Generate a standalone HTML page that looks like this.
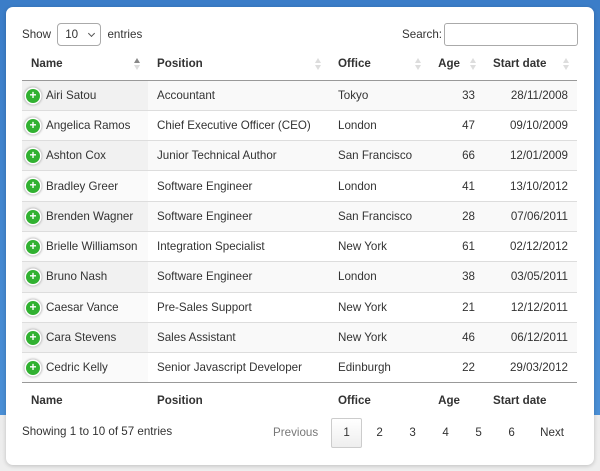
<!DOCTYPE html>
<html><head><style>
*{box-sizing:border-box}
body{margin:0;width:600px;height:471px;overflow:hidden;font-family:"Liberation Sans",Arial,sans-serif;font-size:11.6px;color:#333;background:linear-gradient(#3b7dc8,#4a8fd6 415px,#ececec 415px,#eeeeee);position:relative}
.card{position:absolute;left:6px;top:7px;width:588px;height:458px;background:#fff;border-radius:7px;box-shadow:0 1px 4px rgba(0,0,0,.2)}
.top{position:absolute;top:23px;height:24px;line-height:24px}
.sel{display:inline-block;width:44px;height:23px;border:1px solid #aaa;border-radius:4px;vertical-align:middle;margin:0 3px;padding-left:7px;line-height:21px;position:relative}
.sel:after{content:"";position:absolute;right:6px;top:7px;width:4px;height:4px;border-right:1px solid #555;border-bottom:1px solid #555;transform:rotate(45deg)}
.search{position:absolute;right:0;top:0}
.search span{display:inline-block;width:134px;height:23px;border:1px solid #aaa;border-radius:3px;vertical-align:middle;margin-left:2px}
table{position:absolute;top:48px;width:555px;border-collapse:collapse;table-layout:fixed}
th{font-weight:bold;text-align:left;height:32px;padding:0 9px;position:relative}
thead th{border-bottom:1px solid #999}
tfoot th{border-top:1px solid #999;height:34px}
td{height:30.3px;padding:0 9px;border-top:1px solid #ddd;white-space:nowrap;overflow:hidden}
tbody tr:first-child td{border-top:none}
tbody tr:nth-child(odd) td{background:#f9f9f9}
tbody tr:nth-child(odd) td:first-child{background:#f1f1f1}
tbody tr:nth-child(even) td:first-child{background:#fafafa}
td:first-child{padding-left:24px;position:relative}
td:first-child:before{content:"+";position:absolute;left:4px;top:8px;width:14px;height:14px;border-radius:50%;background:#31b131;color:#fff;font-weight:bold;font-size:12px;line-height:13px;text-align:center;box-shadow:0 0 0 1.5px #fff,0 0 2px 2px #aaa}
.r{text-align:right}
.s:after{content:"";position:absolute;right:8px;top:10px;border:3.5px solid transparent;border-bottom:5px solid #ddd;border-top:0}
.s:before{content:"";position:absolute;right:8px;top:17px;border:3.5px solid transparent;border-top:5px solid #ddd;border-bottom:0}
.s.a:after{border-bottom-color:#888}
.bot{position:absolute;line-height:20px}
.pg{position:absolute;right:0;top:-4px;display:flex}
.pg span{display:inline-block;width:33px;text-align:center;line-height:28px;height:30px;border:1px solid transparent;color:#333}
.pg .c{border:1px solid #ccc;border-radius:2px;background:linear-gradient(#fff,#eee);width:31px;margin:0 1px}
.pg .d{width:auto;padding:0 11px 0 14px;color:#777}
.pg .n{width:auto;padding:0 14px 0 11px}
</style></head><body>
<div class="card"></div>
<div class="top" style="left:22px;right:22px">Show <span class="sel">10</span> entries<div class="search">Search:<span></span></div></div>
<table style="left:22px">
<colgroup><col style="width:126px"><col style="width:181px"><col style="width:100px"><col style="width:55px"><col style="width:93px"></colgroup>
<thead><tr><th class="s a">Name</th><th class="s">Position</th><th class="s">Office</th><th class="s r" style="padding-right:24px">Age</th><th class="s">Start date</th></tr></thead>
<tbody>
<tr><td>Airi Satou</td><td>Accountant</td><td>Tokyo</td><td class="r">33</td><td class="r">28/11/2008</td></tr>
<tr><td>Angelica Ramos</td><td>Chief Executive Officer (CEO)</td><td>London</td><td class="r">47</td><td class="r">09/10/2009</td></tr>
<tr><td>Ashton Cox</td><td>Junior Technical Author</td><td>San Francisco</td><td class="r">66</td><td class="r">12/01/2009</td></tr>
<tr><td>Bradley Greer</td><td>Software Engineer</td><td>London</td><td class="r">41</td><td class="r">13/10/2012</td></tr>
<tr><td>Brenden Wagner</td><td>Software Engineer</td><td>San Francisco</td><td class="r">28</td><td class="r">07/06/2011</td></tr>
<tr><td>Brielle Williamson</td><td>Integration Specialist</td><td>New York</td><td class="r">61</td><td class="r">02/12/2012</td></tr>
<tr><td>Bruno Nash</td><td>Software Engineer</td><td>London</td><td class="r">38</td><td class="r">03/05/2011</td></tr>
<tr><td>Caesar Vance</td><td>Pre-Sales Support</td><td>New York</td><td class="r">21</td><td class="r">12/12/2011</td></tr>
<tr><td>Cara Stevens</td><td>Sales Assistant</td><td>New York</td><td class="r">46</td><td class="r">06/12/2011</td></tr>
<tr><td>Cedric Kelly</td><td>Senior Javascript Developer</td><td>Edinburgh</td><td class="r">22</td><td class="r">29/03/2012</td></tr>
</tbody>
<tfoot><tr><th>Name</th><th>Position</th><th>Office</th><th class="r" style="padding-right:24px">Age</th><th>Start date</th></tr></tfoot>
</table>
<div class="bot" style="left:22px;right:21px;top:422px">Showing 1 to 10 of 57 entries
<div class="pg"><span class="d">Previous</span><span class="c">1</span><span>2</span><span>3</span><span>4</span><span>5</span><span>6</span><span class="n">Next</span></div></div>
</body></html>
